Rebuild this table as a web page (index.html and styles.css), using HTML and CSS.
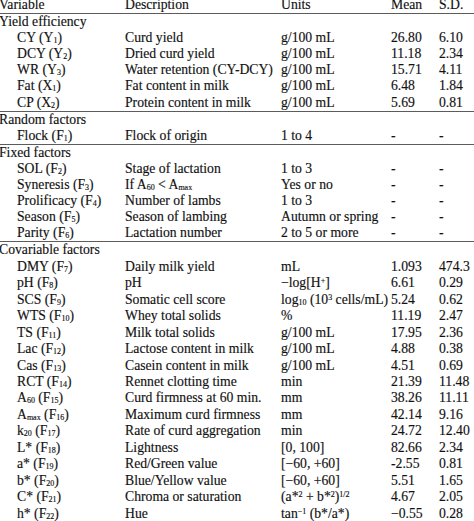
FILE: index.html
```html
<!DOCTYPE html>
<html>
<head>
<meta charset="utf-8">
<link rel="stylesheet" href="styles.css">
</head>
<body>
<table class="tbl">
  <colgroup>
    <col class="c1"><col class="c2"><col class="c3"><col class="c4"><col class="c5">
  </colgroup>
  <thead>
    <tr class="hd rule"><th>Variable</th><th>Description</th><th>Units</th><th>Mean</th><th>S.D.</th></tr>
  </thead>
  <tbody>
    <tr><td class="grp" colspan="5">Yield efficiency</td></tr>
    <tr><td class="in">CY (Y<span class="sb">1</span>)</td><td>Curd yield</td><td>g/100 mL</td><td>26.80</td><td>6.10</td></tr>
    <tr><td class="in">DCY (Y<span class="sb">2</span>)</td><td>Dried curd yield</td><td>g/100 mL</td><td>11.18</td><td>2.34</td></tr>
    <tr><td class="in">WR (Y<span class="sb">3</span>)</td><td>Water retention (CY-DCY)</td><td>g/100 mL</td><td>15.71</td><td>4.11</td></tr>
    <tr><td class="in">Fat (X<span class="sb">1</span>)</td><td>Fat content in milk</td><td>g/100 mL</td><td>6.48</td><td>1.84</td></tr>
    <tr class="rule"><td class="in">CP (X<span class="sb">2</span>)</td><td>Protein content in milk</td><td>g/100 mL</td><td>5.69</td><td>0.81</td></tr>

    <tr><td class="grp" colspan="5">Random factors</td></tr>
    <tr class="rule"><td class="in">Flock (F<span class="sb">1</span>)</td><td>Flock of origin</td><td>1 to 4</td><td>-</td><td>-</td></tr>

    <tr><td class="grp" colspan="5">Fixed factors</td></tr>
    <tr><td class="in">SOL (F<span class="sb">2</span>)</td><td>Stage of lactation</td><td>1 to 3</td><td>-</td><td>-</td></tr>
    <tr><td class="in">Syneresis (F<span class="sb">3</span>)</td><td>If A<span class="sb">60</span> &lt; A<span class="sb">max</span></td><td>Yes or no</td><td>-</td><td>-</td></tr>
    <tr><td class="in">Prolificacy (F<span class="sb">4</span>)</td><td>Number of lambs</td><td>1 to 3</td><td>-</td><td>-</td></tr>
    <tr><td class="in">Season (F<span class="sb">5</span>)</td><td>Season of lambing</td><td>Autumn or spring</td><td>-</td><td>-</td></tr>
    <tr class="rule"><td class="in">Parity (F<span class="sb">6</span>)</td><td>Lactation number</td><td>2 to 5 or more</td><td>-</td><td>-</td></tr>
  </tbody>
  <tbody class="cov">
    <tr><td class="grp" colspan="5">Covariable factors</td></tr>
    <tr><td class="in">DMY (F<span class="sb">7</span>)</td><td>Daily milk yield</td><td>mL</td><td>1.093</td><td>474.3</td></tr>
    <tr><td class="in">pH (F<span class="sb">8</span>)</td><td>pH</td><td>−log[H<span class="sp">+</span>]</td><td>6.61</td><td>0.29</td></tr>
    <tr><td class="in">SCS (F<span class="sb">9</span>)</td><td>Somatic cell score</td><td>log<span class="sb">10</span> (10<span class="sp">3</span> cells/mL)</td><td>5.24</td><td>0.62</td></tr>
    <tr><td class="in">WTS (F<span class="sb">10</span>)</td><td>Whey total solids</td><td>%</td><td>11.19</td><td>2.47</td></tr>
    <tr><td class="in">TS (F<span class="sb">11</span>)</td><td>Milk total solids</td><td>g/100 mL</td><td>17.95</td><td>2.36</td></tr>
    <tr><td class="in">Lac (F<span class="sb">12</span>)</td><td>Lactose content in milk</td><td>g/100 mL</td><td>4.88</td><td>0.38</td></tr>
    <tr><td class="in">Cas (F<span class="sb">13</span>)</td><td>Casein content in milk</td><td>g/100 mL</td><td>4.51</td><td>0.69</td></tr>
    <tr><td class="in">RCT (F<span class="sb">14</span>)</td><td>Rennet clotting time</td><td>min</td><td>21.39</td><td>11.48</td></tr>
    <tr><td class="in">A<span class="sb">60</span> (F<span class="sb">15</span>)</td><td>Curd firmness at 60 min.</td><td>mm</td><td>38.26</td><td>11.11</td></tr>
    <tr><td class="in">A<span class="sb">max</span> (F<span class="sb">16</span>)</td><td>Maximum curd firmness</td><td>mm</td><td>42.14</td><td>9.16</td></tr>
    <tr><td class="in">k<span class="sb">20</span> (F<span class="sb">17</span>)</td><td>Rate of curd aggregation</td><td>min</td><td>24.72</td><td>12.40</td></tr>
    <tr><td class="in">L* (F<span class="sb">18</span>)</td><td>Lightness</td><td>[0, 100]</td><td>82.66</td><td>2.34</td></tr>
    <tr><td class="in">a* (F<span class="sb">19</span>)</td><td>Red/Green value</td><td>[−60, +60]</td><td>-2.55</td><td>0.81</td></tr>
    <tr><td class="in">b* (F<span class="sb">20</span>)</td><td>Blue/Yellow value</td><td>[−60, +60]</td><td>5.51</td><td>1.65</td></tr>
    <tr><td class="in">C* (F<span class="sb">21</span>)</td><td>Chroma or saturation</td><td>(a*<span class="sp">2</span> + b*<span class="sp">2</span>)<span class="sp">1/2</span></td><td>4.67</td><td>2.05</td></tr>
    <tr><td class="in">h* (F<span class="sb">22</span>)</td><td>Hue</td><td>tan<span class="sp">−1</span> (b*/a*)</td><td>−0.55</td><td>0.28</td></tr>
  </tbody>
</table>
</body>
</html>
```

FILE: styles.css
```css
html, body {
  margin: 0;
  padding: 0;
  background: #ffffff;
  overflow: hidden;
}

body {
  font-family: "Liberation Serif", "DejaVu Serif", serif;
  font-size: 13.7px;
  color: #111111;
  -webkit-text-stroke: 0.15px #111111;
}

.tbl {
  border-collapse: collapse;
  table-layout: fixed;
  width: 476px;
  margin-top: -2px;
  margin-left: -1px;
}

.c1 { width: 126px; }
.c2 { width: 156px; }
.c3 { width: 110px; }
.c4 { width: 48px; }
.c5 { width: 36px; }

.tbl th,
.tbl td {
  padding: 0;
  height: 16.1px;
  line-height: 16.1px;
  text-align: left;
  font-weight: normal;
  white-space: nowrap;
  vertical-align: middle;
}

.tbl .hd th {
  height: 15.1px;
  line-height: 14px;
  vertical-align: top;
}

.tbl .cov td {
  height: 16.45px;
  line-height: 16.45px;
}

.tbl tr.rule > th,
.tbl tr.rule > td {
  border-bottom: 1px solid #5c5c5c;
}

.tbl .in {
  padding-left: 18px;
}

.sb {
  font-size: 8px;
  line-height: 0;
  vertical-align: -1px;
}

.sp {
  font-size: 8px;
  line-height: 0;
  vertical-align: 4px;
}
```
